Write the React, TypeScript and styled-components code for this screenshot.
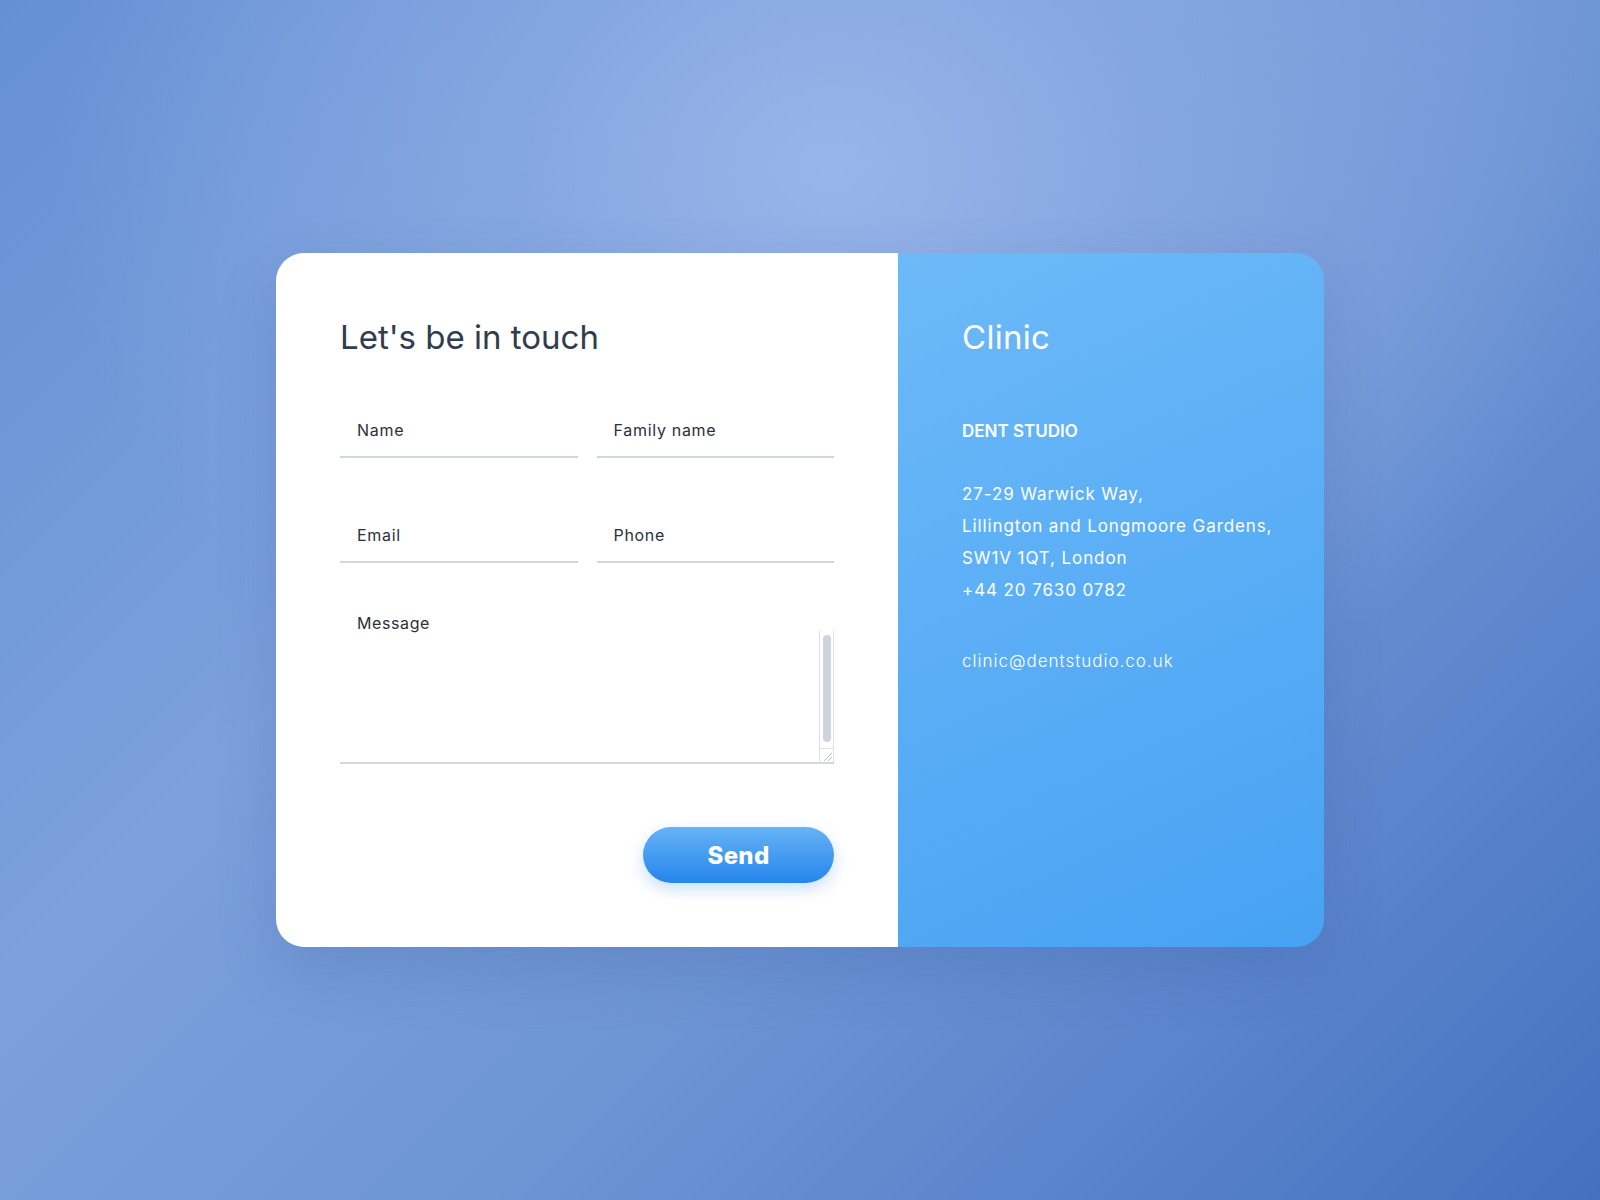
import * as React from 'react';
import styled, { createGlobalStyle } from 'styled-components';

const GlobalStyle = createGlobalStyle`
  html, body {
    margin: 0;
    padding: 0;
  }
  body {
    min-height: 100vh;
    font-family: Inter, "Noto Sans", "Liberation Sans", sans-serif;
    background:
      radial-gradient(ellipse 780px 620px at 52% 14%, rgba(152, 181, 233, 1) 0%, rgba(138, 170, 227, 0.75) 40%, rgba(120, 155, 220, 0) 100%),
      linear-gradient(135deg, #6590d4 0%, #7ca1dc 35%, #6e95d4 60%, #5a84cc 80%, #4470be 100%);
  }
`;

export default function App() {
  return (
    <>
      <GlobalStyle />
      <Page>
        <Card>
          <FormPanel>
            <Heading>Let's be in touch</Heading>
            <Fields>
              <Input placeholder="Name" />
              <Input placeholder="Family name" />
              <Input placeholder="Email" />
              <Input placeholder="Phone" />
            </Fields>
            <MessageField>
              <MessageLabel>Message</MessageLabel>
              <MessageBox>
                <TextArea />
                <ScrollTrack>
                  <ScrollThumb />
                  <Resizer>
                    <svg width="13" height="13" viewBox="0 0 13 13">
                      <path d="M4 12 L12 4 M8 12 L12 8" stroke="#b9c0ca" strokeWidth="1" fill="none" />
                    </svg>
                  </Resizer>
                </ScrollTrack>
              </MessageBox>
            </MessageField>
            <Actions>
              <SendButton>Send</SendButton>
            </Actions>
          </FormPanel>
          <InfoPanel>
            <InfoTitle>Clinic</InfoTitle>
            <StudioName>DENT STUDIO</StudioName>
            <Address>
              27-29 Warwick Way,
              <br />
              Lillington and Longmoore Gardens,
              <br />
              SW1V 1QT, London
              <br />
              +44 20 7630 0782
            </Address>
            <Email>clinic@dentstudio.co.uk</Email>
          </InfoPanel>
        </Card>
      </Page>
    </>
  );
}

const Page = styled.main`
  min-height: 100vh;
  display: flex;
  align-items: center;
  justify-content: center;
`;
const Card = styled.section`
  width: 1048px;
  height: 694px;
  display: grid;
  grid-template-columns: 622px 426px;
  border-radius: 28px;
  overflow: hidden;
  box-shadow: 0 24px 60px rgba(40, 70, 140, 0.18);
`;
const FormPanel = styled.div`
  background: #ffffff;
  padding: 64px;
  display: flex;
  flex-direction: column;
`;
const Heading = styled.h2`
  margin: 0;
  font-size: 33px;
  line-height: 40px;
  font-weight: 400;
  color: #2f3d4d;
`;
const Fields = styled.div`
  margin-top: 53px;
  display: grid;
  grid-template-columns: 1fr 1fr;
  column-gap: 19px;
  row-gap: 57px;
`;
const Input = styled.input`
  box-sizing: border-box;
  width: 100%;
  height: 48px;
  padding: 0 16px 6px 17px;
  border: none;
  border-bottom: 2px solid #d3d7de;
  outline: none;
  background: transparent;
  font-family: inherit;
  font-size: 16px;
  letter-spacing: 0.7px;
  color: #2b303a;
  &::placeholder {
    color: #2b303a;
    opacity: 1;
  }
`;
const MessageField = styled.div`
  margin-top: 52px;
  display: flex;
  flex-direction: column;
`;
const MessageLabel = styled.label`
  padding-left: 17px;
  font-size: 16px;
  line-height: 16px;
  letter-spacing: 0.6px;
  color: #2b303a;
`;
const MessageBox = styled.div`
  height: 131px;
  display: flex;
  border-bottom: 2px solid #d3d7de;
`;
const TextArea = styled.textarea`
  flex: 1;
  border: none;
  outline: none;
  resize: none;
  background: transparent;
  font-family: inherit;
  font-size: 16px;
  padding: 8px 16px;
`;
const ScrollTrack = styled.div`
  width: 15px;
  box-sizing: border-box;
  border-left: 1px solid #dde1e6;
  border-right: 1px solid #dde1e6;
  display: flex;
  flex-direction: column;
  align-items: center;
`;
const ScrollThumb = styled.div`
  width: 8px;
  flex: 1;
  margin: 4px 0 6px;
  border-radius: 4px;
  background: #cdd4dd;
`;
const Resizer = styled.div`
  width: 100%;
  height: 13px;
  border-top: 1px solid #dde1e6;
  display: flex;
  justify-content: flex-end;
`;
const Actions = styled.div`
  margin-top: 63px;
  display: flex;
  justify-content: flex-end;
`;
const SendButton = styled.button`
  width: 191px;
  height: 56px;
  margin-bottom: 2px;
  border: none;
  border-radius: 28px;
  background: linear-gradient(180deg, #66b3f6 0%, #2585ec 100%);
  box-shadow: 0 6px 16px rgba(60, 140, 240, 0.28);
  color: #ffffff;
  font-family: inherit;
  font-size: 24px;
  font-weight: 800;
  letter-spacing: 0.3px;
  cursor: pointer;
`;
const InfoPanel = styled.div`
  padding: 64px;
  background: linear-gradient(155deg, #6cbaf8 0%, #5caff6 45%, #47a2f3 100%);
  color: #ffffff;
  display: flex;
  flex-direction: column;
`;
const InfoTitle = styled.h2`
  margin: 0;
  font-size: 33px;
  line-height: 40px;
  font-weight: 400;
  letter-spacing: 0.3px;
`;
const StudioName = styled.div`
  margin-top: 62px;
  font-size: 17px;
  line-height: 24px;
  font-weight: 600;
`;
const Address = styled.p`
  margin: 35px 0 0;
  font-size: 17px;
  line-height: 32px;
  font-weight: 400;
  letter-spacing: 0.9px;
  white-space: nowrap;
`;
const Email = styled.div`
  margin-top: 39px;
  font-size: 17px;
  line-height: 32px;
  font-weight: 300;
  letter-spacing: 1px;
`;
